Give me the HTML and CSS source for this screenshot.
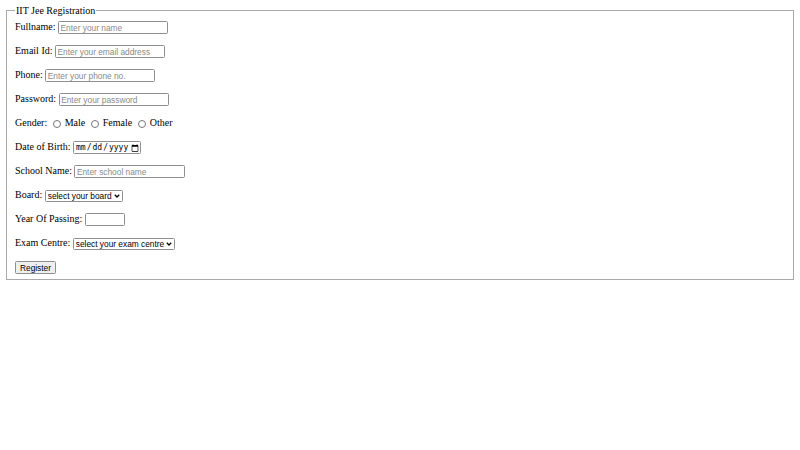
FILE: index.html
```html
<!DOCTYPE html>
<html>
<head>
<meta charset="utf-8">
<title>IIT Jee Registration</title>
<link rel="stylesheet" href="styles.css">
</head>
<body>
<form class="form">
<fieldset class="box">
<legend class="title">IIT Jee Registration</legend>
<div class="row"><label>Fullname:</label> <input class="field" type="text" placeholder="Enter your name"></div>
<div class="row"><label>Email Id:</label> <input class="field" type="email" placeholder="Enter your email address"></div>
<div class="row"><label>Phone:</label> <input class="field" type="tel" placeholder="Enter your phone no."></div>
<div class="row"><label>Password:</label> <input class="field" type="password" placeholder="Enter your password"></div>
<div class="row"><label>Gender:</label> <input class="radio" type="radio" name="g"> Male <input class="radio" type="radio" name="g"> Female <input class="radio" type="radio" name="g"> Other</div>
<div class="row"><label>Date of Birth:</label> <input class="field date" type="date"></div>
<div class="row"><label>School Name:</label> <input class="field school" type="text" placeholder="Enter school name"></div>
<div class="row"><label>Board:</label> <span class="wrap"><select class="pick board"><option>select your board</option></select><svg class="chev" viewBox="0 0 6 4" width="6" height="4"><path d="M0.8 0.8 L3 3 L5.2 0.8" fill="none" stroke="#000" stroke-width="1.3"/></svg></span></div>
<div class="row"><label>Year Of Passing:</label> <input class="field year" type="text"></div>
<div class="row"><label>Exam Centre:</label> <span class="wrap"><select class="pick centre"><option>select your exam centre</option></select><svg class="chev" viewBox="0 0 6 4" width="6" height="4"><path d="M0.8 0.8 L3 3 L5.2 0.8" fill="none" stroke="#000" stroke-width="1.3"/></svg></span></div>
<div class="row last"><button class="btn" type="button">Register</button></div>
</fieldset>
</form>
</body>
</html>
```
FILE: styles.css
```css
body {
  margin: 5px;
  font-family: "Liberation Serif", serif;
  font-size: 10px;
  color: #000;
  background: #fff;
}
.form {
  margin: 0;
}
.box {
  margin: 0 1px;
  padding: 4px 8px 6px;
  border: 1px solid #a9a9a9;
}
.title {
  padding: 0 1px;
  line-height: 11px;
}
.row {
  height: 13px;
  line-height: 13px;
  margin-bottom: 11px;
  white-space: nowrap;
}
.row.last {
  margin-bottom: 0;
}
.field,
.pick,
.btn {
  box-sizing: border-box;
  font-family: "Liberation Sans", Arial, sans-serif;
  font-size: 8.33px;
  vertical-align: middle;
  margin: 0;
  color: #000;
}
.field {
  width: 110px;
  height: 13px;
  padding: 0 1.5px;
  border: 1px solid #8f8f8f;
  border-radius: 1.5px;
}
.field::placeholder {
  color: #8a8a8a;
}
.school {
  width: 111px;
}
.year {
  width: 40px;
}
.date {
  width: 68px;
  font-family: "DejaVu Sans Mono", monospace;
  font-size: 8px;
  padding: 0 1px;
}
.date::-webkit-calendar-picker-indicator {
  margin: 0;
  padding: 0;
  width: 8px;
  height: 8px;
}
.wrap {
  position: relative;
  display: inline-block;
  vertical-align: middle;
  line-height: 0;
}
.pick {
  -webkit-appearance: none;
  appearance: none;
  height: 12px;
  padding: 0 9px 0 2px;
  border: 1px solid #8f8f8f;
  border-radius: 1.5px;
  background: #fff;
  line-height: 10px;
}
.chev {
  position: absolute;
  right: 3px;
  top: 4px;
  pointer-events: none;
}
.board {
  width: 78px;
}
.centre {
  width: 102px;
}
.radio {
  width: 8px;
  height: 8px;
  margin: 0 1.5px 0 3px;
  vertical-align: middle;
}
.btn {
  width: 41px;
  height: 13px;
  padding: 0 3px;
  border: 1px solid #8f8f8f;
  border-radius: 1.5px;
  background: #efefef;
}
```
